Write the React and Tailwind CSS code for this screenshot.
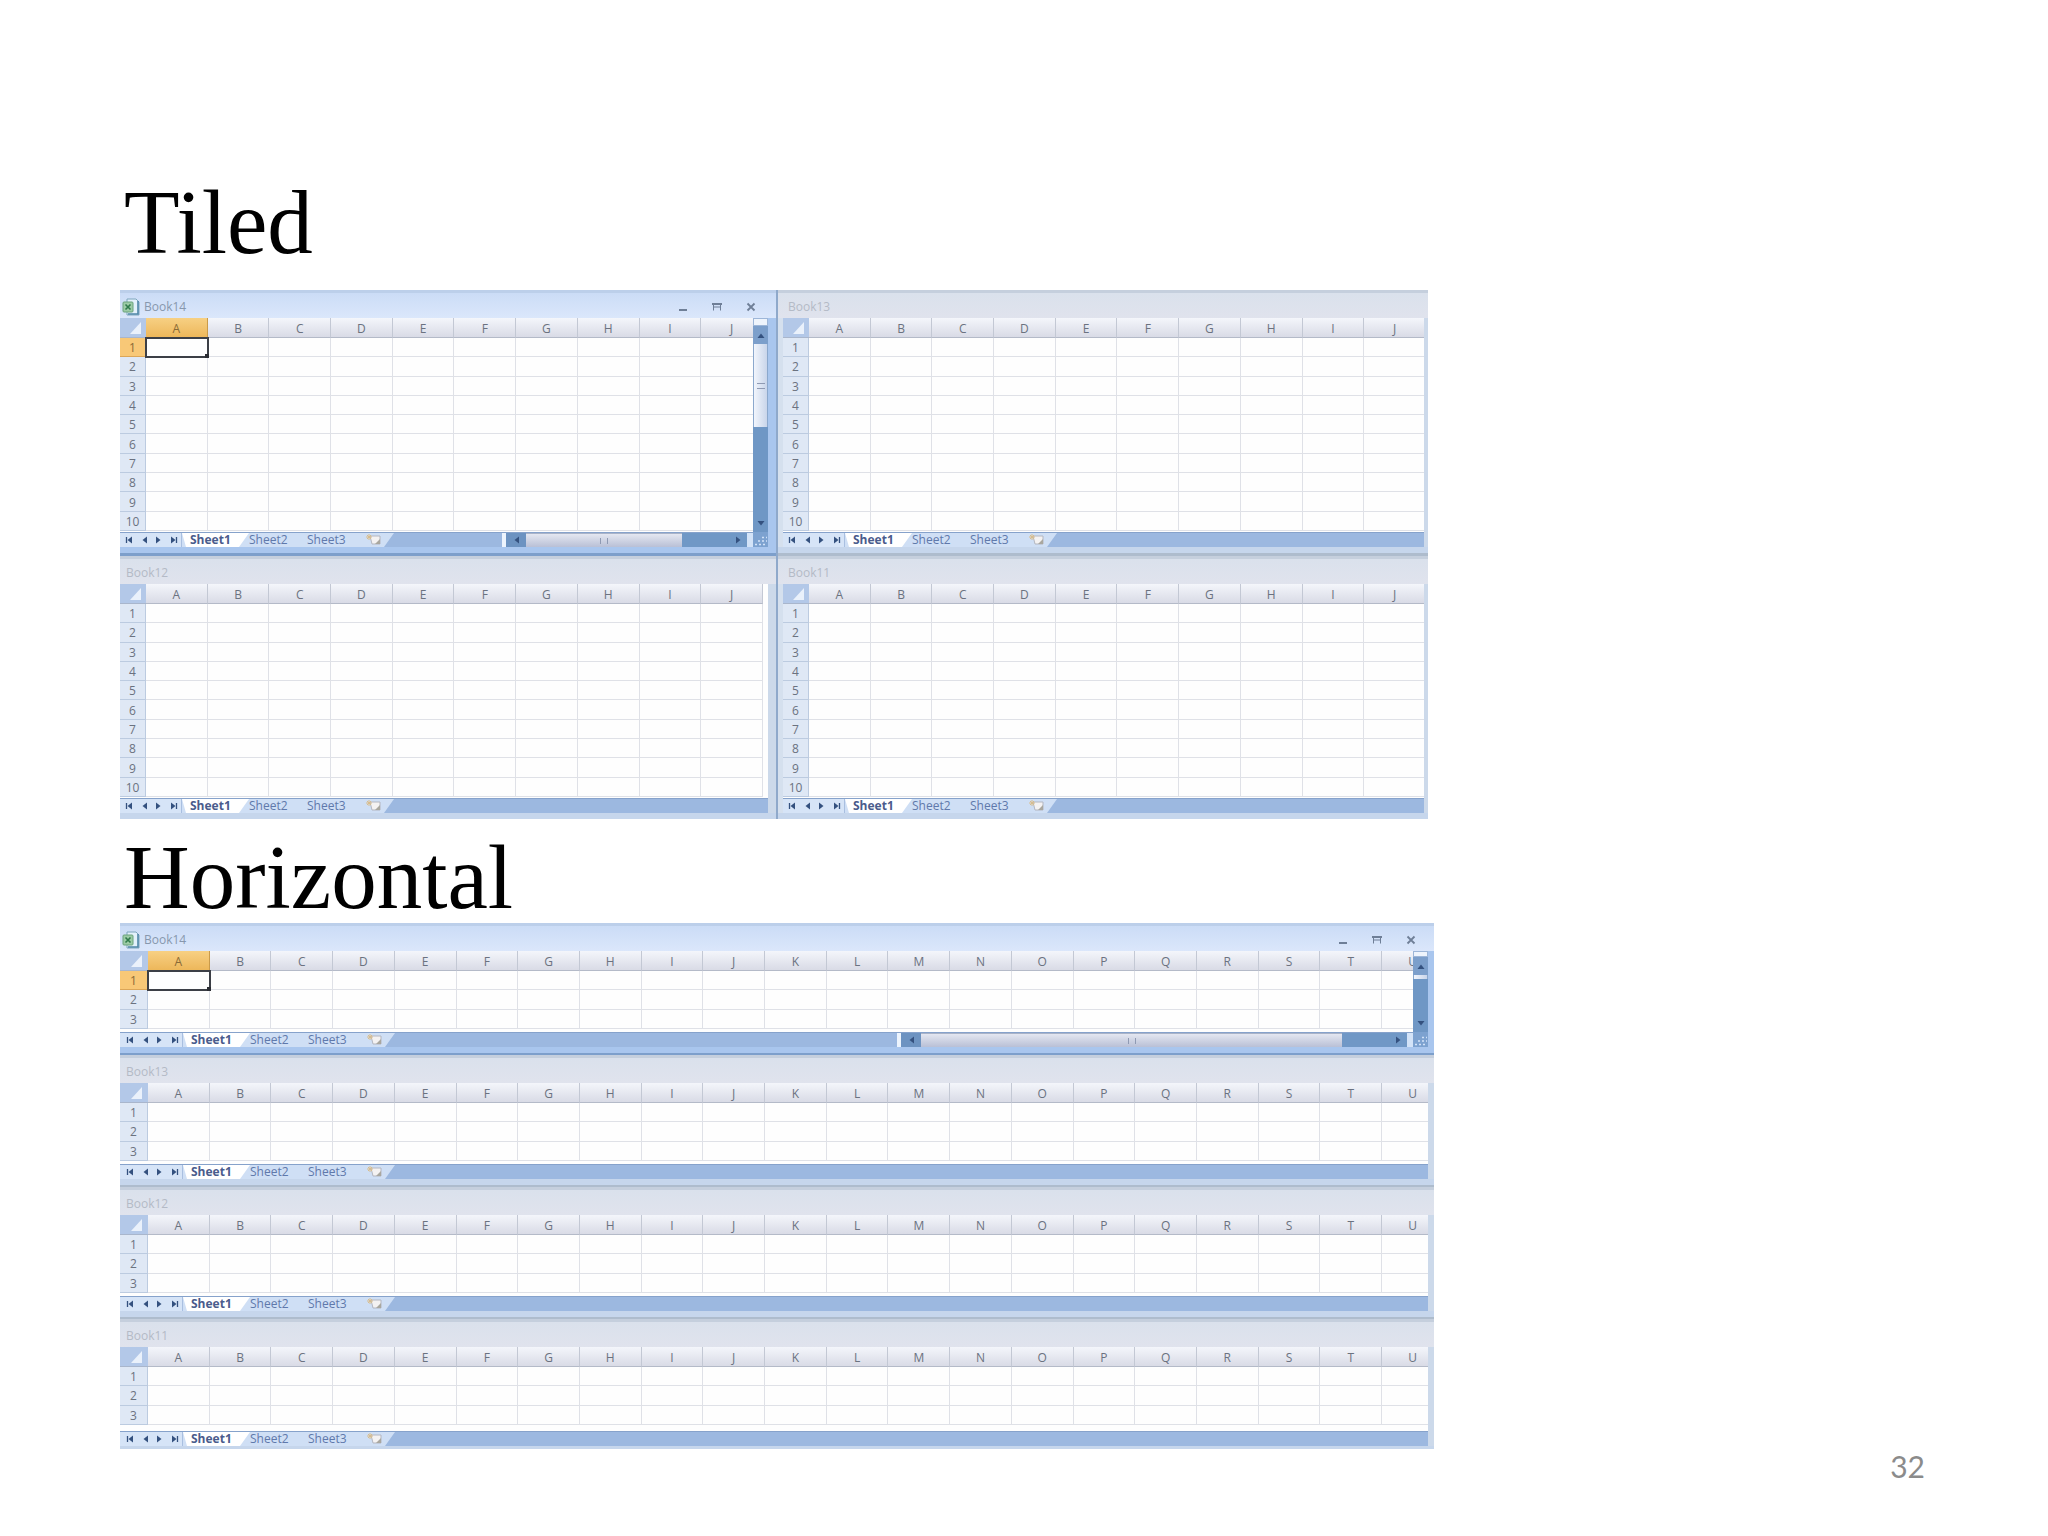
import { clsx } from 'clsx'

const LETTERS = 'ABCDEFGHIJKLMNOPQRSTU'.split('')
const TILED_COLS = LETTERS.slice(0, 10)
const TILED_ROWS = [1, 2, 3, 4, 5, 6, 7, 8, 9, 10]
const SHORT_ROWS = [1, 2, 3]

function BookIcon() {
    return (
        <svg viewBox="0 0 18 18" className="h-[18px] w-[18px]" aria-hidden="true">
            <path d="M5 1h9l3 3v13H5z" fill="#e3f1fb" stroke="#7fa6bd" />
            <path d="M16 3v13H6" fill="none" stroke="#4f86a8" strokeWidth="1.6" />
            <rect x="1" y="4" width="10" height="10" rx="1" fill="#9ccba6" stroke="#6ba37c" />
            <path d="M3.500 6.500l5 5M8.500 6.500l-5 5" stroke="#2f7a4b" strokeWidth="1.600" />
        </svg>
    )
}

function InsertSheetIcon() {
    return (
        <svg viewBox="0 0 18 14" className="h-3.5 w-[18px]" aria-hidden="true">
            <path d="M5 3h10v8H7z" fill="#f4f2f2" stroke="#b3b6c0" />
            <path d="M10 11l5-5v5z" fill="#a9a79f" />
            <path d="M4 1v6M1 4h6M2 2l4 4M6 2L2 6" stroke="#d9bd8c" />
        </svg>
    )
}

function Arrow({ dir, bar }) {
    const turn = { left: 'rotate-180', right: '', up: '-rotate-90', down: 'rotate-90' }[dir]
    return (
        <svg viewBox="0 0 8 8" className={clsx('h-2 w-2', turn)} aria-hidden="true">
            <path d="M1 0.500v7l4.500-3.500z" fill="#34517f" />
            {bar && <path d="M6.500 1v6" stroke="#34517f" strokeWidth="1.300" />}
        </svg>
    )
}

function TitleBar({ name, active, inset, tall }) {
    return (
        <div
            className={clsx(
                'flex h-7 items-center justify-between border-t-3 pt-[3px]',
                inset ? 'pl-2.5' : active ? 'pl-0.5' : 'pl-1.5',
                active
                    ? 'border-[#bccfea] bg-linear-to-b from-[#cbdcf6] to-[#dbe7fb]'
                    : 'border-[#c5cfdd] bg-linear-to-b from-[#dae1ec] to-[#e0e3ed]'
            )}
        >
            <div className="flex items-center gap-1">
                {active && <BookIcon />}
                <span className={clsx('text-[12px] leading-4', active ? 'text-[#8797ad]' : 'text-[#b4bac6]')}>{name}</span>
            </div>
            {active && (
                <div className={clsx('flex text-[#6f7f97]', tall ? 'pr-2' : 'pr-1.5')}>
                    <button aria-label="Minimize" className="flex h-5 w-[34px] items-center justify-center">
                        <svg viewBox="0 0 10 10" className="h-2.5 w-2.5">
                            <path d="M1 8h8" stroke="currentColor" strokeWidth="2" />
                        </svg>
                    </button>
                    <button aria-label="Restore" className="flex h-5 w-[34px] items-center justify-center">
                        <svg viewBox="0 0 10 10" className="h-2.5 w-2.5">
                            <path d="M0 2h10" stroke="currentColor" strokeWidth="2" />
                            <path d="M1.500 2v6.500M8.500 2v6.500M1.500 5h7" stroke="currentColor" fill="none" />
                        </svg>
                    </button>
                    <button aria-label="Close" className="flex h-5 w-[34px] items-center justify-center">
                        <svg viewBox="0 0 10 10" className="h-2.5 w-2.5">
                            <path d="M1.500 1.500l7 7M8.500 1.500l-7 7" stroke="currentColor" strokeWidth="1.800" />
                        </svg>
                    </button>
                </div>
            )}
        </div>
    )
}

function Grid({ cols, rows, active, tall }) {
    return (
        <table
            className={clsx(
                'table-fixed border-separate border-spacing-0 text-center text-[12px] leading-4 text-[#6b7280]',
                tall ? 'h-[213px] w-[643px]' : 'h-[78px] w-[1324px]'
            )}
        >
            <thead>
                <tr className="h-5">
                    <th className={clsx('border-b border-[#a9b6cc] bg-[#b3c8e8] p-0', tall ? 'w-[26px]' : 'w-7')}>
                        <svg viewBox="0 0 26 19" className="h-[19px] w-full" aria-hidden="true">
                            <path d="M21 4v12H10z" fill="#eaf1fb" />
                        </svg>
                    </th>
                    {cols.map((c) => (
                        <th
                            key={c}
                            scope="col"
                            className={clsx(
                                'h-5 border-r border-b bg-linear-to-b p-0 pt-0.5 font-normal',
                                active && c === 'A'
                                    ? 'border-[#c99a4a] from-[#f7d083] to-[#edb75a] text-[#8a6a36]'
                                    : 'border-r-[#c3c8d4] border-b-[#b4bac8] from-[#f4f6fb] to-[#d9dbe6]'
                            )}
                        >
                            {c}
                        </th>
                    ))}
                </tr>
            </thead>
            <tbody>
                {rows.map((r) => (
                    <tr key={r}>
                        <th
                            scope="row"
                            className={clsx(
                                'border-r border-b p-0 pt-0.5 font-normal',
                                active && r === 1
                                    ? 'border-[#dba658] bg-[#f8c877] text-[#8a6a36]'
                                    : 'border-[#bccbe0] bg-[#dfe8f5]'
                            )}
                        >
                            {r}
                        </th>
                        {cols.map((c) => (
                            <td
                                key={c}
                                className={clsx(
                                    'border-r border-b border-[#dfe1e7] bg-[#fefefe] p-0',
                                    active && r === 1 && c === 'A' && 'relative outline-2 -outline-offset-1 outline-[#3c3f46]'
                                )}
                            >
                                {active && r === 1 && c === 'A' && (
                                    <span className="absolute -right-0.5 -bottom-0.5 h-1 w-1 bg-[#2b2d33]" />
                                )}
                            </td>
                        ))}
                    </tr>
                ))}
            </tbody>
        </table>
    )
}

function HorizontalScroll({ tall }) {
    return (
        <div className={clsx('flex h-full', tall ? 'w-[251px]' : 'w-[516px]')}>
            <span className="w-1 bg-[#edf4fd]" />
            <button aria-label="Scroll left" className="flex w-5 items-center justify-center bg-[#6d93c1]">
                <Arrow dir="left" />
            </button>
            <div className="flex flex-1 items-center justify-center border-t border-[#a9b3c8] bg-linear-to-b from-[#e4e7f1] to-[#b9c0d6]">
                <span className="h-1.5 w-2 border-x border-[#8f9ab3]" />
            </div>
            <div className="flex w-[65px] items-center justify-end bg-[#7098c6] pr-1">
                <button aria-label="Scroll right" className="flex">
                    <Arrow dir="right" />
                </button>
            </div>
            <span className="w-1.5 bg-[#d3e3f8]" />
        </div>
    )
}

function VerticalScroll({ tall }) {
    return (
        <div className="flex w-[15px] flex-col bg-[#6f97c5]">
            <span className={clsx('border border-[#9db6d8] bg-[#eef4fc]', tall ? 'h-2' : 'h-1.5')} />
            <button aria-label="Scroll up" className="flex h-[18px] items-center justify-center bg-[#7c9fcb]">
                <Arrow dir="up" />
            </button>
            <div
                className={clsx(
                    'flex items-center justify-center border-x border-[#8ba8cd] bg-linear-to-r from-[#f1f5fc] to-[#c9d5ea]',
                    tall ? 'h-[83px]' : 'h-1'
                )}
            >
                {tall && <span className="h-1.5 w-2 border-y border-[#8f9ab3]" />}
            </div>
            <span className="flex-1" />
            <button aria-label="Scroll down" className="flex h-4 items-center justify-center">
                <Arrow dir="down" />
            </button>
            <svg viewBox="0 0 15 15" className="h-[15px] w-[15px] bg-[#7da2d0]" aria-hidden="true">
                <path d="M2 12.500h12M5 9h9M9 5.500h5" stroke="#d2e2f7" strokeWidth="1.500" strokeDasharray="2 2" />
            </svg>
        </div>
    )
}

function SheetTabs({ active, tall }) {
    return (
        <div className="flex h-[15px] justify-between border-t border-[#86a2cb] bg-[#9cb8e0] text-[12px] leading-[14px]">
            <div
                className={clsx(
                    'flex bg-[#cfdff5] [clip-path:polygon(0_0,100%_0,calc(100%-10px)_100%,0_100%)]',
                    tall ? 'w-[274px]' : 'w-[275px]'
                )}
            >
                <div
                    className={clsx(
                        'flex items-center justify-around border-r border-[#a9bfe0] bg-[#d6e4f7] pl-0.5',
                        tall ? 'w-[62px]' : 'w-[63px]'
                    )}
                >
                    <button aria-label="First sheet"><Arrow dir="left" bar /></button>
                    <button aria-label="Previous sheet"><Arrow dir="left" /></button>
                    <button aria-label="Next sheet"><Arrow dir="right" /></button>
                    <button aria-label="Last sheet"><Arrow dir="right" bar /></button>
                </div>
                <button className="w-[67px] bg-white pl-2 text-left font-bold text-[#4a5c8c] [clip-path:polygon(0_0,100%_0,calc(100%-10px)_100%,4px_100%)]">
                    Sheet1
                </button>
                <button className="w-[58px] text-left text-[#5f79ab]">Sheet2</button>
                <button className="w-[58px] text-left text-[#5f79ab]">Sheet3</button>
                <button aria-label="Insert sheet" className="flex items-center">
                    <InsertSheetIcon />
                </button>
            </div>
            {active && <HorizontalScroll tall={tall} />}
        </div>
    )
}

function BookWindow({ name, active, inset, tall, last, cols, rows, frame }) {
    const edge = active ? 'bg-[#a9c6ee]' : 'bg-[#ccd9ea]'
    return (
        <section className={clsx('flex min-w-0 flex-col', inset && 'border-l-2 border-[#8fa9cb]')}>
            <TitleBar name={name} active={active} inset={inset} tall={tall} />
            <div className="flex">
                {inset && <span className="w-[5px] bg-[#d5e0ee]" />}
                <div className="min-w-0 flex-1 overflow-hidden">
                    <div className={clsx('overflow-hidden bg-[#fefefe]', tall ? 'h-[214px]' : last ? 'h-[84px]' : 'h-[81px]')}>
                        <Grid cols={cols} rows={rows} active={active} tall={tall} />
                    </div>
                    <SheetTabs active={active} tall={tall} />
                </div>
                {active && <VerticalScroll tall={tall} />}
                <span className={clsx(edge, frame)} />
            </div>
            <div
                className={clsx(
                    active ? 'bg-[#a9c6ee]' : 'bg-[#c6d6ec]',
                    last ? (tall ? 'h-1.5' : 'h-[3px]') : tall ? 'h-[9px] border-b-3' : 'h-2 border-b-2',
                    active ? 'border-[#7d9fcb]' : 'border-[#aebccd]'
                )}
            />
        </section>
    )
}

export default function App() {
    return (
        <div className="flex min-h-screen flex-col bg-white font-['Open_Sans',sans-serif]">
            <main className="px-[120px] pt-[183px]">
                <h2 className="pl-1 font-['Liberation_Serif',serif] text-[91px] leading-[80px] text-black">Tiled</h2>
                <div className="mt-[27px] grid w-full max-w-[1308px] grid-cols-[656fr_652fr]">
                    <BookWindow name="Book14" active tall cols={TILED_COLS} rows={TILED_ROWS} frame="w-2" />
                    <BookWindow name="Book13" inset tall cols={TILED_COLS} rows={TILED_ROWS} frame="w-1" />
                    <BookWindow name="Book12" tall last cols={TILED_COLS} rows={TILED_ROWS} frame="w-2" />
                    <BookWindow name="Book11" inset tall last cols={TILED_COLS} rows={TILED_ROWS} frame="w-1" />
                </div>

                <h2 className="mt-[19px] pl-1 font-['Liberation_Serif',serif] text-[91px] leading-[80px] text-black">Horizontal</h2>
                <div className="mt-[5px] flex w-full max-w-[1314px] flex-col">
                    <BookWindow name="Book14" active cols={LETTERS} rows={SHORT_ROWS} frame="w-1.5" />
                    <BookWindow name="Book13" cols={LETTERS} rows={SHORT_ROWS} frame="w-1.5" />
                    <BookWindow name="Book12" cols={LETTERS} rows={SHORT_ROWS} frame="w-1.5" />
                    <BookWindow name="Book11" last cols={LETTERS} rows={SHORT_ROWS} frame="w-1.5" />
                </div>
            </main>
            <footer className="mt-auto pr-[123px] pb-14 text-right font-['Lato',sans-serif] text-[30px] leading-7 text-[#8b8b8b]">
                32
            </footer>
        </div>
    )
}
